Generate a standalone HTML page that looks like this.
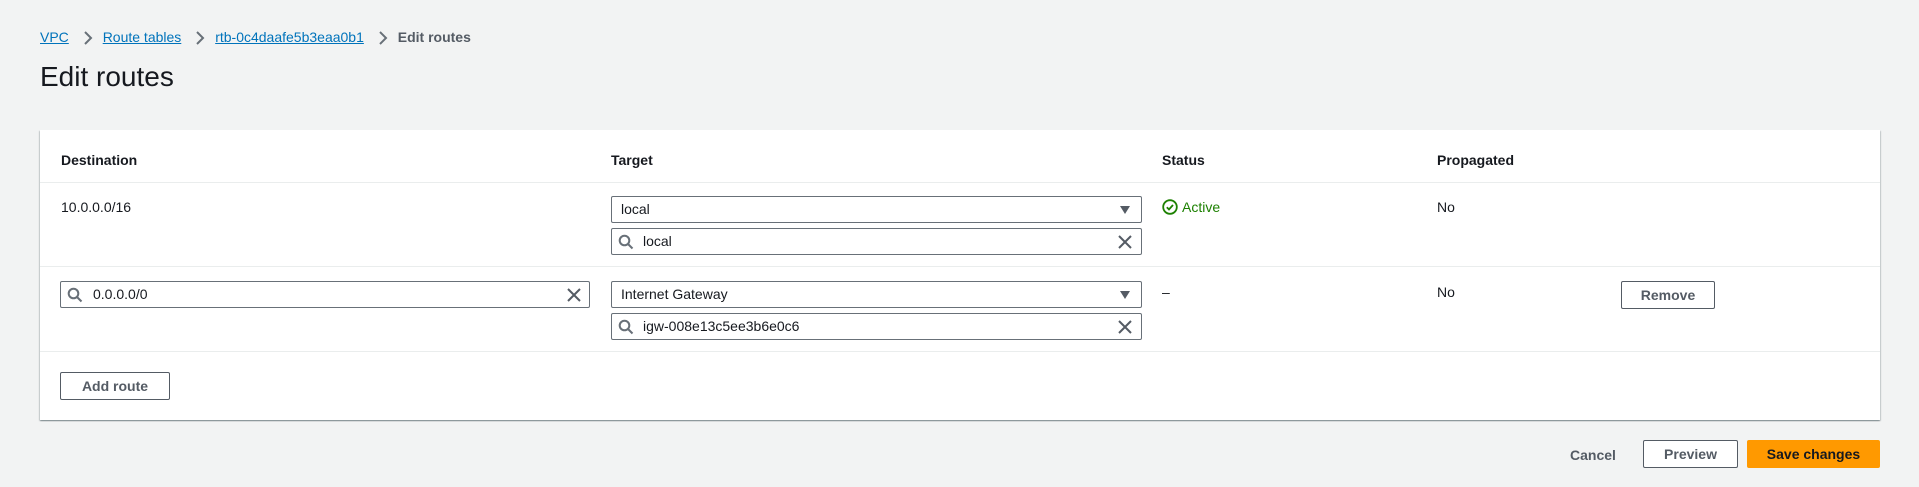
<!DOCTYPE html>
<html><head><meta charset="utf-8"><style>
*{box-sizing:border-box;margin:0;padding:0}
body{width:1919px;height:487px;background:#f2f3f3;font-family:"Liberation Sans",sans-serif;color:#16191f;font-size:14px;position:relative;overflow:hidden}
.a{position:absolute}
.lnk{color:#0073bb;text-decoration:underline}
.hd{font-weight:bold;font-size:14px}
.box{position:absolute;background:#fff;border:1px solid #687078;border-radius:2px;height:27px;line-height:25px;font-size:14px}
.btn{position:absolute;background:#fff;border:1px solid #545b64;border-radius:2px;height:28px;line-height:26px;text-align:center;font-weight:bold;color:#545b64;font-size:14px}
.hr{position:absolute;left:40px;width:1840px;height:1px;background:#eaeded}
svg{position:absolute}
</style></head><body>
<div class="a" style="left:40px;top:28px;font-size:14px;line-height:18px;white-space:nowrap">
<span class="lnk">VPC</span>
<svg style="position:relative;display:inline-block;vertical-align:middle;margin:0 10px" width="10" height="14" viewBox="0 0 10 14"><path d="M2 1l6 6-6 6" fill="none" stroke="#687078" stroke-width="2"/></svg><span class="lnk">Route tables</span>
<svg style="position:relative;display:inline-block;vertical-align:middle;margin:0 10px" width="10" height="14" viewBox="0 0 10 14"><path d="M2 1l6 6-6 6" fill="none" stroke="#687078" stroke-width="2"/></svg><span class="lnk">rtb-0c4daafe5b3eaa0b1</span>
<svg style="position:relative;display:inline-block;vertical-align:middle;margin:0 10px" width="10" height="14" viewBox="0 0 10 14"><path d="M2 1l6 6-6 6" fill="none" stroke="#687078" stroke-width="2"/></svg><span style="color:#545b64;font-weight:bold">Edit routes</span>
</div>
<div class="a" style="left:40px;top:61px;font-size:28px;line-height:32px">Edit routes</div>

<div class="a" style="left:40px;top:130px;width:1840px;height:290px;background:#fff;box-shadow:0 1px 1px rgba(0,28,36,.3),1px 1px 1px rgba(0,28,36,.15),-1px 1px 1px rgba(0,28,36,.15)"></div>

<div class="a hd" style="left:61px;top:152px">Destination</div>
<div class="a hd" style="left:611px;top:152px">Target</div>
<div class="a hd" style="left:1162px;top:152px">Status</div>
<div class="a hd" style="left:1437px;top:152px">Propagated</div>
<div class="hr" style="top:182px"></div>

<div class="a" style="left:61px;top:199px">10.0.0.0/16</div>
<div class="box" style="left:611px;top:196px;width:531px;padding-left:9px">local</div>
<svg style="left:1119px;top:205px" width="12" height="10"><path d="M1 1h10L6 9z" fill="#545b64"/></svg>
<div class="box" style="left:611px;top:228px;width:531px;padding-left:31px">local</div>
<svg style="left:618px;top:234px" width="16" height="16" viewBox="0 0 16 16"><circle cx="6.5" cy="6.5" r="4.8" fill="none" stroke="#687078" stroke-width="2"/><path d="M10 10l4.5 4.5" stroke="#687078" stroke-width="2"/></svg>
<svg style="left:1118px;top:235px" width="14" height="14"><path d="M1 1l12 12M13 1L1 13" stroke="#545b64" stroke-width="2"/></svg>
<svg style="left:1162px;top:199px" width="16" height="16" viewBox="0 0 16 16"><circle cx="8" cy="8" r="6.8" fill="none" stroke="#1d8102" stroke-width="1.8"/><path d="M4.8 8.2l2.2 2.2 4-4.4" fill="none" stroke="#1d8102" stroke-width="1.8"/></svg>
<div class="a" style="left:1182px;top:199px;color:#1d8102">Active</div>
<div class="a" style="left:1437px;top:199px">No</div>
<div class="hr" style="top:266px"></div>

<div class="box" style="left:60px;top:281px;width:530px;padding-left:32px">0.0.0.0/0</div>
<svg style="left:67px;top:287px" width="16" height="16" viewBox="0 0 16 16"><circle cx="6.5" cy="6.5" r="4.8" fill="none" stroke="#687078" stroke-width="2"/><path d="M10 10l4.5 4.5" stroke="#687078" stroke-width="2"/></svg>
<svg style="left:567px;top:288px" width="14" height="14"><path d="M1 1l12 12M13 1L1 13" stroke="#545b64" stroke-width="2"/></svg>
<div class="box" style="left:611px;top:281px;width:531px;padding-left:9px">Internet Gateway</div>
<svg style="left:1119px;top:290px" width="12" height="10"><path d="M1 1h10L6 9z" fill="#545b64"/></svg>
<div class="box" style="left:611px;top:313px;width:531px;padding-left:31px">igw-008e13c5ee3b6e0c6</div>
<svg style="left:618px;top:319px" width="16" height="16" viewBox="0 0 16 16"><circle cx="6.5" cy="6.5" r="4.8" fill="none" stroke="#687078" stroke-width="2"/><path d="M10 10l4.5 4.5" stroke="#687078" stroke-width="2"/></svg>
<svg style="left:1118px;top:320px" width="14" height="14"><path d="M1 1l12 12M13 1L1 13" stroke="#545b64" stroke-width="2"/></svg>
<div class="a" style="left:1162px;top:284px">–</div>
<div class="a" style="left:1437px;top:284px">No</div>
<div class="btn" style="left:1621px;top:281px;width:94px">Remove</div>
<div class="hr" style="top:351px"></div>

<div class="btn" style="left:60px;top:372px;width:110px">Add route</div>

<div class="a" style="left:1570px;top:447px;font-weight:bold;color:#545b64">Cancel</div>
<div class="btn" style="left:1643px;top:440px;width:95px">Preview</div>
<div class="btn" style="left:1747px;top:440px;width:133px;background:#ff9900;border-color:#ff9900;color:#16191f">Save changes</div>
</body></html>
